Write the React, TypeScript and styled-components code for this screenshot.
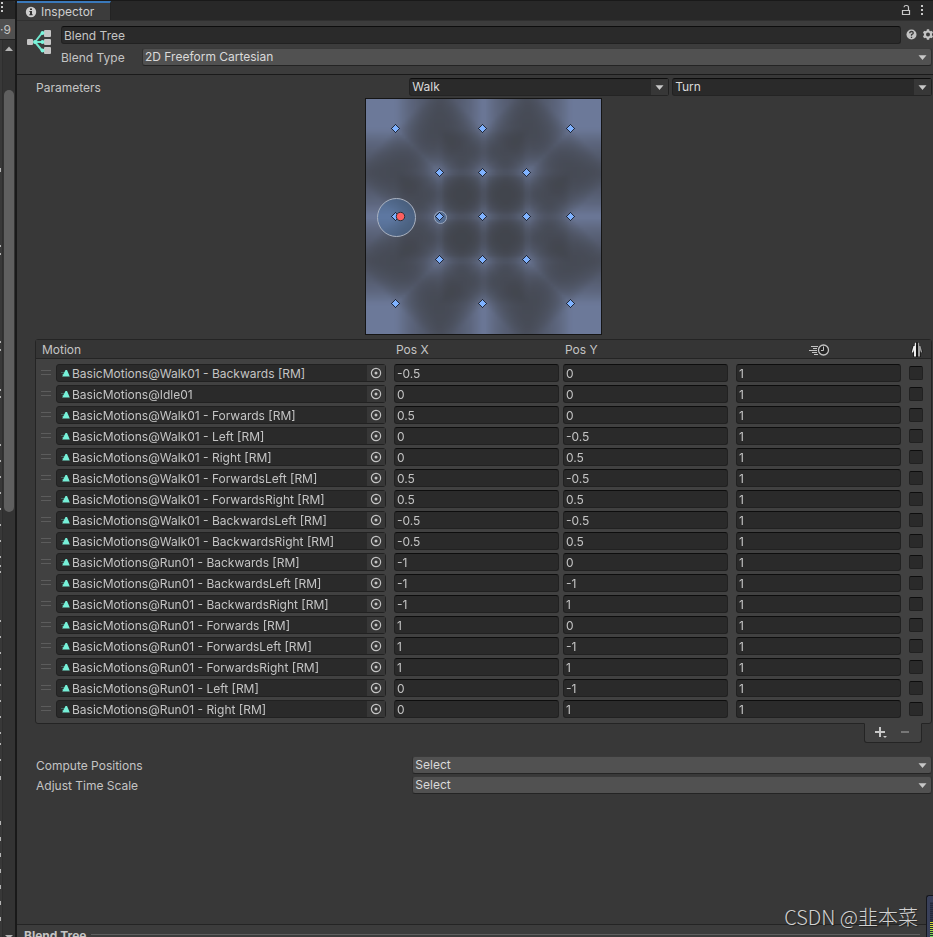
import React, { useEffect, useRef } from "react";
import styled, { createGlobalStyle, css } from "styled-components";

const GlobalStyle = createGlobalStyle`
  * { box-sizing: border-box; }
  body { margin: 0; background: #383838; }
  body, button, input, select {
    font-family: Inter, "Liberation Sans", sans-serif;
    font-size: 12px;
    line-height: 16px;
    color: #c4c4c4;
  }
`;

const Window = styled.div`
  display: flex;
  height: 100vh;
  overflow: hidden;
  border-top: 1px solid #191919;
`;

/* ---------- neighbouring panel ---------- */

const SidePanel = styled.aside`
  flex: none;
  width: 17px;
  display: flex;
  flex-direction: column;
  border-right: 2px solid #191919;
  background: #383838;
`;

const SideTab = styled.div`
  height: 18px;
  background: #282828;
  border-top-right-radius: 3px;
`;

const SideCount = styled.div`
  height: 21px;
  padding-right: 5px;
  border-bottom: 1px solid #242424;
  background: #505050;
  line-height: 22px;
  text-align: right;
  white-space: nowrap;
`;

const SideBody = styled.div`
  flex: 1;
  min-height: 0;
  display: flex;
`;

const SideMarks = styled.svg`
  flex: none;
  width: 2px;
  height: 100%;
`;

const ScrollTrack = styled.div`
  flex: 1;
  display: flex;
  flex-direction: column;
  align-items: center;
  justify-content: space-between;
  background: #333333;
  border-left: 1px solid #2e2e2e;
`;

const ScrollThumb = styled.div`
  width: 10px;
  height: 47%;
  margin: 34px 0 auto;
  border-radius: 5px;
  background: #5f5f5f;
`;

/* ---------- inspector ---------- */

const Inspector = styled.main`
  flex: 1;
  min-width: 0;
  display: flex;
  flex-direction: column;
`;

const TabBar = styled.div`
  height: 19px;
  display: flex;
  align-items: stretch;
  justify-content: space-between;
  background: #282828;
`;

const Tab = styled.button`
  display: flex;
  align-items: center;
  gap: 4px;
  padding: 0 16px 0 8px;
  border: 0;
  border-top: 2px solid #3a79bb;
  border-right: 1px solid #232323;
  background: #3c3c3c;
  color: #cfcfcf;
`;

const TabActions = styled.div`
  display: flex;
  align-items: center;
  gap: 9px;
  padding: 0 9px 1px 0;
`;

const IconButton = styled.button`
  display: flex;
  flex: none;
  align-items: center;
  justify-content: center;
  padding: 0;
  border: 0;
  background: none;
  color: #c4c4c4;
`;

const AssetHeader = styled.header`
  display: flex;
  gap: 7px;
  height: 55px;
  padding: 5px 0 0 9px;
  background: #3c3c3c;
  border-bottom: 1px solid #1a1a1a;
  border-top: 1px solid #303030;
`;

const AssetFields = styled.div`
  flex: 1;
  min-width: 0;
  display: flex;
  flex-direction: column;
  gap: 4px;
`;

const AssetRow = styled.div<{ $gap: number; $inset?: number }>`
  display: flex;
  align-items: center;
  gap: ${(p) => p.$gap}px;
  height: 18px;
  padding-right: ${(p) => p.$inset ?? 0}px;
`;

const TypeLabel = styled.label`
  width: 75px;
  padding-top: 1px;
`;

const fieldBox = css`
  height: 18px;
  border: 1px solid #212121;
  border-top-color: #0d0d0d;
  border-radius: 3px;
  background: #2a2a2a;
`;

const TextField = styled.input`
  ${fieldBox}
  display: block;
  width: 100%;
  min-width: 0;
  padding: 1px 2px 0;
  outline: 0;
`;

const PopupBox = styled.div<{ $editable?: boolean }>`
  flex: 1;
  min-width: 0;
  display: grid;
  grid-template-columns: minmax(0, 1fr) 17px;
  align-items: center;
  height: 18px;
  border: 1px solid ${(p) => (p.$editable ? "#212121" : "#303030")};
  border-top-color: ${(p) => (p.$editable ? "#0d0d0d" : "#3a3a3a")};
  border-bottom-color: #242424;
  border-radius: 3px;
  background: ${(p) => (p.$editable ? "#2a2a2a" : "#515151")};
  > * { grid-row: 1; }
  > select { grid-column: 1 / -1; }
  > span { grid-column: 2; }
`;

const PopupSelect = styled.select`
  appearance: none;
  width: 100%;
  height: 16px;
  padding: 0 2px;
  border: 0;
  outline: 0;
  background: transparent;
  color: #dadada;
`;

const ArrowCell = styled.span<{ $boxed?: boolean }>`
  display: flex;
  align-items: center;
  justify-content: center;
  height: 16px;
  pointer-events: none;
  background: ${(p) => (p.$boxed ? "#373737" : "transparent")};
`;

const Content = styled.div`
  flex: 1;
  min-height: 0;
  padding: 3px 1px 0 18px;
`;

const Property = styled.div`
  display: grid;
  grid-template-columns: 42fr 58fr;
  align-items: center;
  height: 18px;
  margin: 0 0 2px 1px;
  > label { padding-top: 2px; }
`;

const PopupPair = styled.div`
  display: flex;
  gap: 3px;
  margin-left: -3px;
`;

const MapFrame = styled.div`
  display: grid;
  width: 237px;
  height: 237px;
  margin: 0 auto 4px;
  border: 1px solid #151515;
  > * { grid-area: 1 / 1; }
`;

const HeatMap = styled.canvas`
  width: 100%;
  height: 100%;
`;

/* ---------- motion table ---------- */

const MotionTable = styled.table`
  display: block;
  border: 1px solid #242424;
  border-radius: 3px;
  background: #414141;
  > thead, > tbody { display: block; }
  > thead { background: #353535; border-bottom: 1px solid #242424; }
  > tbody { padding: 5px 0 2px; }
`;

const Row = styled.tr<{ $head?: boolean }>`
  display: grid;
  grid-template-columns: 20px 338fr 169fr 173fr 172fr 23px;
  height: ${(p) => (p.$head ? 18 : 21)}px;
  align-items: ${(p) => (p.$head ? "center" : "start")};
`;

const HeadCell = styled.th<{ $indent?: number; $wide?: boolean; $center?: boolean }>`
  display: flex;
  align-items: center;
  justify-content: ${(p) => (p.$center ? "center" : "flex-start")};
  grid-column: ${(p) => (p.$wide ? "span 2" : "auto")};
  padding: 1px ${(p) => (p.$center ? 6 : 0)}px 0 ${(p) => p.$indent ?? 0}px;
  font-weight: 400;
`;

const Cell = styled.td<{ $gap?: number }>`
  min-width: 0;
  padding: 0 ${(p) => p.$gap ?? 0}px 0 0;
`;

const Handle = styled.div`
  width: 10px;
  height: 5px;
  margin: 6px 0 0 5px;
  border: solid #5c5c5c;
  border-width: 1px 0;
`;

const ObjectField = styled.div`
  ${fieldBox}
  border-top-color: #212121;
  display: flex;
  align-items: center;
  padding-left: 4px;
  > svg { flex: none; }
  > button { width: 18px; height: 16px; background: #373737; }
`;

const ObjectName = styled.input`
  flex: 1;
  min-width: 0;
  height: 16px;
  padding: 1px 0 0 1px;
  border: 0;
  outline: 0;
  background: transparent;
`;

const Check = styled.input`
  appearance: none;
  display: block;
  width: 14px;
  height: 14px;
  margin: 2px 0 0 1px;
  border: 1px solid #212121;
  border-top-color: #0d0d0d;
  border-radius: 2px;
  background: #2a2a2a;
`;

const ListFooter = styled.div`
  display: flex;
  justify-content: space-around;
  width: 58px;
  height: 20px;
  margin: -1px 10px 13px auto;
  padding: 0 5px 2px 3px;
  border: 1px solid #242424;
  border-top-color: #414141;
  border-radius: 0 0 3px 3px;
  background: #414141;
`;

const PreviewBar = styled.footer`
  flex: none;
  display: flex;
  gap: 5px;
  height: 13px;
  padding: 0 13px 0 7px;
  overflow: hidden;
  border-top: 1px solid #242424;
  background: #3c3c3c;
`;

const PreviewTitle = styled.strong`
  padding-top: 3px;
  font-weight: 700;
`;

const PreviewRule = styled.hr`
  flex: 1;
  height: 1px;
  margin: 9px 0 0;
  border: 0;
  background: #5f5f5f;
`;

const Watermark = styled.div`
  position: absolute;
  right: 15px;
  bottom: 6px;
  font: 20px/28px "Noto Sans CJK SC", sans-serif;
  font-weight: 300;
  color: #d2d2d2;
  text-shadow: 1px 1px 1px #222222;
`;

const MeterWindow = styled.div`
  position: absolute;
  right: 0;
  bottom: 0;
  width: 7px;
  height: 42px;
  padding: 6px 0 0 3px;
  border: solid #15171d;
  border-width: 1px 0 0 1px;
  border-radius: 3px 0 0 0;
  background: #39405a;
`;

const MeterBars = styled.div`
  height: 100%;
  background:
    repeating-linear-gradient(transparent 0 1px, #23283a 1px 2px),
    linear-gradient(#30364a 0 56%, #d6dc37 56% 68%, #61d95a 100%);
`;

/* ---------- icons ---------- */

const DownArrow = () => (
  <svg width="9" height="5" viewBox="0 0 9 5" aria-hidden="true">
    <path d="M.5 .2h8L4.500 5z" fill="#c8c8c8" />
  </svg>
);

const InfoIcon = () => (
  <svg width="12" height="12" viewBox="0 0 12 12" aria-hidden="true">
    <circle cx="6" cy="6" r="5.2" fill="#cfcfcf" />
    <path d="M5 2.4h2v1.5H5zM4.4 5H7v3.2h.7v1.1H4.3V8.2H5V6h-.6z" fill="#333" />
  </svg>
);

const KebabIcon = () => (
  <svg width="4" height="12" viewBox="0 0 4 12" fill="#c8c8c8" aria-hidden="true">
    <path d="M1 1h2v2H1zM1 5h2v2H1zM1 9h2v2H1z" />
  </svg>
);

const LockIcon = () => (
  <svg width="10" height="12" viewBox="0 0 10 12" fill="none" stroke="#c8c8c8" aria-hidden="true">
    <path d="M1.5 6.5h7v4h-7zM3 3.2Q3.2 1.5 5 1.5h.5q2 0 2 2v3" strokeWidth="1.2" />
  </svg>
);

const HelpIcon = () => (
  <svg width="12" height="12" viewBox="0 0 12 12" aria-hidden="true">
    <circle cx="6.500" cy="5.500" r="5" fill="#c4c4c4" />
    <path d="M4.700 4.300Q4.700 2.500 6.500 2.500t1.800 1.500Q8.300 4.900 6.500 5.700v1M6.500 7.700V9" fill="none" stroke="#3c3c3c" strokeWidth="1.3" />
  </svg>
);

const GearIcon = () => (
  <svg width="12" height="12" viewBox="0 0 12 12" aria-hidden="true">
    <g transform="translate(1 -.5)">
      <g stroke="#c4c4c4" strokeWidth="2.4">
        <path d="M6 .8v10.400M1.500 3.400l9 5.200M10.500 3.400l-9 5.200" />
      </g>
      <circle cx="6" cy="6" r="4" fill="#c4c4c4" />
      <circle cx="6" cy="6" r="2" fill="#3c3c3c" />
    </g>
  </svg>
);

const BlendTreeIcon = () => (
  <svg width="28" height="30" viewBox="0 0 28 30" aria-hidden="true">
    <g fill="#c6c6c6">
      <rect x="1" y="13" width="6" height="6" rx="1" />
      <rect x="18" y="4" width="7" height="7" rx="1" />
      <rect x="18" y="13" width="7" height="6" rx="1" />
      <rect x="18" y="21" width="7" height="7" rx="1" />
    </g>
    <path d="M9 16h8M9 16l7-9M9 16l7 8.500" stroke="#6fe8cf" strokeWidth="2" fill="none" />
    <g fill="#7cf5dc">
      <circle cx="9" cy="16" r="2" /><circle cx="16.500" cy="7" r="1.9" />
      <circle cx="16.500" cy="16" r="1.900" /><circle cx="16.500" cy="24.500" r="1.900" />
    </g>
  </svg>
);

const MotionIcon = () => (
  <svg width="10" height="8" viewBox="0 0 10 8" aria-hidden="true">
    <path d="M0 3.500h4M1 5.500h2" stroke="#3f665f" />
    <path d="M4.500 1h1.500L8.800 7.500H1.200z" fill="#76f0d8" />
  </svg>
);

const PickerIcon = () => (
  <svg width="12" height="12" viewBox="0 0 12 12" aria-hidden="true">
    <circle cx="6" cy="6" r="4.600" fill="none" stroke="#c4c4c4" strokeWidth="1.200" />
    <circle cx="6" cy="6" r="1.500" fill="#c4c4c4" />
  </svg>
);

const SpeedIcon = () => (
  <svg width="21" height="12" viewBox="0 0 21 12" fill="none" stroke="#c4c4c4" role="img" aria-label="Time scale">
    <path d="M2 2.500h7M4 4.500h4M0 6.500h8M3 8.500h5M5 10.500h4" />
    <circle cx="14.500" cy="6" r="5" fill="#252525" strokeWidth="1.300" />
    <path d="M14.500 2.500V6.500H12" />
  </svg>
);

const MirrorIcon = () => (
  <svg width="12" height="15" viewBox="0 0 12 15" role="img" aria-label="Mirror">
    <path d="M0 9L2 3h7l3 6v2h-2v4H2v-4H0z" fill="#1d1d1d" />
    <path d="M5 .5v14H3V8L2 10.500H.7L2.500 4l1.500-.5-.3-1.500Q4 .8 5 .5z" fill="#eeeeee" />
    <path d="M7 .5v14h2V8l1 2.500h1.300L9.500 4 8 3.500l.3-1.500Q8 .8 7 .5z" fill="#9a9a9a" />
    <path d="M6 0v15" stroke="#0c0c0c" />
  </svg>
);

const PlusIcon = () => (
  <svg width="14" height="14" viewBox="0 0 14 14" aria-hidden="true">
    <path d="M1 7h10M6 2v10" stroke="#c8c8c8" strokeWidth="2" />
    <path d="M9 11h4l-2 2z" fill="#c8c8c8" />
  </svg>
);

const MinusIcon = () => (
  <svg width="10" height="14" viewBox="0 0 10 14" aria-hidden="true">
    <path d="M1 7h8" stroke="#777" strokeWidth="2" />
  </svg>
);

/* ---------- data ---------- */

type Motion = { name: string; x: number; y: number };

const motions: Motion[] = [
  { name: "BasicMotions@Walk01 - Backwards [RM]", x: -0.5, y: 0 },
  { name: "BasicMotions@Idle01", x: 0, y: 0 },
  { name: "BasicMotions@Walk01 - Forwards [RM]", x: 0.5, y: 0 },
  { name: "BasicMotions@Walk01 - Left [RM]", x: 0, y: -0.5 },
  { name: "BasicMotions@Walk01 - Right [RM]", x: 0, y: 0.5 },
  { name: "BasicMotions@Walk01 - ForwardsLeft [RM]", x: 0.5, y: -0.5 },
  { name: "BasicMotions@Walk01 - ForwardsRight [RM]", x: 0.5, y: 0.5 },
  { name: "BasicMotions@Walk01 - BackwardsLeft [RM]", x: -0.5, y: -0.5 },
  { name: "BasicMotions@Walk01 - BackwardsRight [RM]", x: -0.5, y: 0.5 },
  { name: "BasicMotions@Run01 - Backwards [RM]", x: -1, y: 0 },
  { name: "BasicMotions@Run01 - BackwardsLeft [RM]", x: -1, y: -1 },
  { name: "BasicMotions@Run01 - BackwardsRight [RM]", x: -1, y: 1 },
  { name: "BasicMotions@Run01 - Forwards [RM]", x: 1, y: 0 },
  { name: "BasicMotions@Run01 - ForwardsLeft [RM]", x: 1, y: -1 },
  { name: "BasicMotions@Run01 - ForwardsRight [RM]", x: 1, y: 1 },
  { name: "BasicMotions@Run01 - Left [RM]", x: 0, y: -1 },
  { name: "BasicMotions@Run01 - Right [RM]", x: 0, y: 1 },
];

const MAP_SIZE = 235;
const UNIT = 87.5;
const SAMPLES = 64;
const toPixel = (v: number, origin: number) => Math.round(origin + v * UNIT);

/** Gradient-band influence of every motion at a position, normalised. */
function weightsAt(x: number, y: number): number[] {
  const raw = motions.map((a) => {
    let w = 1;
    for (const b of motions) {
      if (b === a) continue;
      const dx = b.x - a.x;
      const dy = b.y - a.y;
      w = Math.min(w, 1 - ((x - a.x) * dx + (y - a.y) * dy) / (dx * dx + dy * dy));
    }
    return Math.max(0, w);
  });
  const sum = raw.reduce((s, w) => s + w, 0) || 1;
  return raw.map((w) => w / sum);
}

/** Pixel-stepped diamond of a given radius, centred on the pixel at 0,0. */
function diamond(radius: number): string {
  let d = "";
  for (let y = -radius; y <= radius; y++) {
    const half = radius - Math.abs(y);
    d += `M${-half} ${y}h${2 * half + 1}v1h${-(2 * half + 1)}z`;
  }
  return d;
}

const BlendMap = () => {
  const ref = useRef<HTMLCanvasElement>(null);

  useEffect(() => {
    const ctx = ref.current?.getContext("2d");
    if (!ctx) return;
    const image = ctx.createImageData(SAMPLES, SAMPLES);
    const scale = MAP_SIZE / UNIT / SAMPLES;
    for (let py = 0; py < SAMPLES; py++) {
      for (let px = 0; px < SAMPLES; px++) {
        const ws = weightsAt((px + 0.5 - SAMPLES / 2) * scale, (SAMPLES / 2 - py - 0.5) * scale);
        const a = 0.5 * ws.reduce((s, w) => s + w * w, 0);
        const i = (py * SAMPLES + px) * 4;
        image.data[i] = 51 + (166 - 51) * a;
        image.data[i + 1] = 51 + (191 - 51) * a;
        image.data[i + 2] = 51 + (255 - 51) * a;
        image.data[i + 3] = 255;
      }
    }
    ctx.putImageData(image, 0, 0);
  }, []);

  return (
    <MapFrame>
      <HeatMap ref={ref} width={SAMPLES} height={SAMPLES} />
      <svg width={MAP_SIZE} height={MAP_SIZE} role="img" aria-label="Blend positions">
        <circle cx="30.500" cy="118.500" r="19" fill="#4a7ab4" fillOpacity=".4" stroke="#aab2c0" />
        <circle cx="74.500" cy="118.500" r="6" fill="#4a7ab4" fillOpacity=".4" stroke="#9aa6bc" />
        {motions.map((m) => (
          <g key={m.name} transform={`translate(${toPixel(m.x, 116.4)} ${toPixel(-m.y, 116.6)})`} shapeRendering="crispEdges">
            <path d={diamond(4)} fill="#20283a" />
            <path d={diamond(3)} fill="#7fb2ff" />
          </g>
        ))}
        <circle cx="34.500" cy="117.500" r="4.200" fill="#ff5f5f" stroke="#2a2f3a" />
      </svg>
    </MapFrame>
  );
};

const Popup = ({ id, label, value, boxed }: { id: string; label?: string; value: string; boxed?: boolean }) => (
  <PopupBox $editable={boxed}>
    <PopupSelect id={id} aria-label={label} defaultValue={value}>
      <option>{value}</option>
    </PopupSelect>
    <ArrowCell $boxed={boxed}><DownArrow /></ArrowCell>
  </PopupBox>
);

const MotionRow = ({ motion }: { motion: Motion }) => (
  <Row>
    <Cell><Handle /></Cell>
    <Cell $gap={8}>
      <ObjectField>
        <MotionIcon />
        <ObjectName readOnly aria-label="Motion" value={motion.name} />
        <IconButton aria-label={`Pick ${motion.name}`}><PickerIcon /></IconButton>
      </ObjectField>
    </Cell>
    <Cell $gap={4}><TextField aria-label="Pos X" defaultValue={motion.x} /></Cell>
    <Cell $gap={8}><TextField aria-label="Pos Y" defaultValue={motion.y} /></Cell>
    <Cell $gap={7}><TextField aria-label="Time scale" defaultValue="1" /></Cell>
    <Cell><Check type="checkbox" aria-label="Mirror" /></Cell>
  </Row>
);

/** Tops of the clipped label ends that show beside the scroll bar. */
const clippedEnds = [
  128, 205, 213, 301, 309, 349, 356, 404, 420, 436, 452, 468, 484, 500, 516, 525, 531,
  580, 596, 612, 628, 644, 660, 676, 692, 703, 719, 736, 781, 797, 813, 829, 845, 861, 877,
];

export default function App() {
  return (
    <>
      <GlobalStyle />
      <Window>
        <SidePanel>
          <SideTab><KebabIcon /></SideTab>
          <SideCount>·9</SideCount>
          <SideBody>
            <SideMarks aria-hidden="true">
              {clippedEnds.map((y) => (
                <rect key={y} x="0" y={y} width="1" height={y > 730 || y === 128 ? 4 : 2} fill="#b4b4b4" />
              ))}
            </SideMarks>
            <ScrollTrack>
              <svg width="8" height="16" viewBox="0 0 8 16" aria-hidden="true">
                <path d="M0 11h8L4 6.500z" fill="#b4b4b4" />
              </svg>
              <ScrollThumb />
              <svg width="8" height="4" viewBox="0 0 8 4" aria-hidden="true">
                <path d="M0 2h8L4 6z" fill="#b4b4b4" />
              </svg>
            </ScrollTrack>
          </SideBody>
        </SidePanel>

        <Inspector>
          <TabBar>
            <Tab><InfoIcon />Inspector</Tab>
            <TabActions>
              <IconButton aria-label="Lock"><LockIcon /></IconButton>
              <IconButton aria-label="Menu"><KebabIcon /></IconButton>
            </TabActions>
          </TabBar>

          <AssetHeader>
            <BlendTreeIcon />
            <AssetFields>
              <AssetRow $gap={4}>
                <TextField aria-label="Name" defaultValue="Blend Tree" />
                <IconButton aria-label="Help"><HelpIcon /></IconButton>
                <IconButton aria-label="Settings"><GearIcon /></IconButton>
              </AssetRow>
              <AssetRow $gap={6} $inset={1}>
                <TypeLabel htmlFor="blend-type">Blend Type</TypeLabel>
                <Popup id="blend-type" value="2D Freeform Cartesian" />
              </AssetRow>
            </AssetFields>
          </AssetHeader>

          <Content>
            <Property>
              <label htmlFor="param-x">Parameters</label>
              <PopupPair>
                <Popup id="param-x" value="Walk" boxed />
                <Popup id="param-y" label="Second parameter" value="Turn" boxed />
              </PopupPair>
            </Property>

            <BlendMap />

            <MotionTable>
              <thead>
                <Row $head>
                  <HeadCell $wide $indent={6}>Motion</HeadCell>
                  <HeadCell $indent={2}>Pos X</HeadCell>
                  <HeadCell $indent={2}>Pos Y</HeadCell>
                  <HeadCell $center><SpeedIcon /></HeadCell>
                  <HeadCell $indent={3}><MirrorIcon /></HeadCell>
                </Row>
              </thead>
              <tbody>
                {motions.map((m) => <MotionRow key={m.name} motion={m} />)}
              </tbody>
            </MotionTable>
            <ListFooter>
              <IconButton aria-label="Add motion"><PlusIcon /></IconButton>
              <IconButton aria-label="Remove motion"><MinusIcon /></IconButton>
            </ListFooter>

            <Property>
              <label htmlFor="compute">Compute Positions</label>
              <Popup id="compute" value="Select" />
            </Property>
            <Property>
              <label htmlFor="adjust">Adjust Time Scale</label>
              <Popup id="adjust" value="Select" />
            </Property>
          </Content>

          <PreviewBar>
            <PreviewTitle>Blend Tree</PreviewTitle>
            <PreviewRule />
          </PreviewBar>
        </Inspector>
      </Window>
      <Watermark>CSDN @韭本菜</Watermark>
      <MeterWindow><MeterBars /></MeterWindow>
    </>
  );
}
